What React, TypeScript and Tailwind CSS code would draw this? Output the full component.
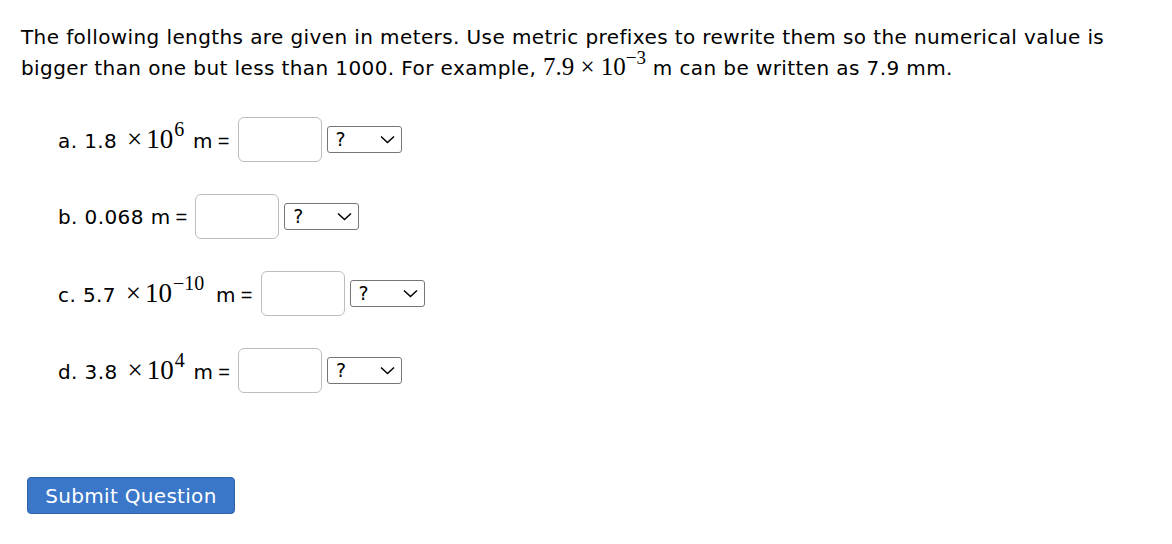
import React from "react";

const sans = { fontFamily: '"DejaVu Sans", sans-serif' };
const serif = { fontFamily: '"Liberation Serif", serif' };
const arial = { fontFamily: '"Liberation Sans", sans-serif' };

function Select() {
  return (
    <div className="flex h-[27px] w-[75px] items-center justify-between rounded-[3px] border border-[#767676] bg-white pl-[8px] pr-[6px]">
      <span className="text-[19px] leading-none text-black" style={sans}>?</span>
      <svg width="15" height="9" viewBox="0 0 15 9" fill="none">
        <path d="M1 1.5 L7.5 7.5 L14 1.5" stroke="#000" strokeWidth="1.5" />
      </svg>
    </div>
  );
}

function Input() {
  return <div className="h-[45px] w-[84px] rounded-[6px] border border-[#bdbdbd] bg-white" />;
}

function Row({ label, exp, extra = false }: { label: string; exp?: string; extra?: boolean }) {
  return (
    <div className="flex items-center">
      <span className="text-[20px] tracking-[0.4px] text-[#000]" style={sans}>
        {label}
        {exp !== undefined && (
          <>
            {" "}
            <span style={serif} className="ml-[3px] text-[27px] tracking-normal">
              <span className="mr-[4px]">×</span>10
              <sup className={`-top-[12px] ml-[1px] text-[20px] ${extra ? "mr-[5px]" : "mr-[2px]"}`}>{exp}</sup>
            </span>
          </>
        )}
        {" "}m<span style={arial} className="ml-[5px] text-[20px] tracking-normal">=</span>
      </span>
      <div className="ml-[8px]"><Input /></div>
      <div className="ml-[5px]"><Select /></div>
    </div>
  );
}

export default function App() {
  return (
    <div className="h-[544px] w-[1172px] bg-white pl-[21px] pt-[22px]" style={sans}>
      <p className="w-[1110px] text-[20px] leading-[30px] tracking-[0.4px] text-black">
        The following lengths are given in meters. Use metric prefixes to rewrite them so the numerical value is
        bigger than one but less than 1000. For example,{" "}
        <span style={serif} className="text-[25px] tracking-normal">
          7.9 × 10<sup className="-top-[11px] text-[19px]">−3</sup>
        </span>{" "}
        m can be written as 7.9 mm.
      </p>
      <div className="ml-[37px] mt-[34px] flex flex-col gap-[32px]">
        <Row label="a. 1.8" exp="6" />
        <Row label="b. 0.068" />
        <Row label="c. 5.7" exp="−10" extra />
        <Row label="d. 3.8" exp="4" />
      </div>
      <button className="mt-[84px] ml-[6px] h-[37px] w-[208px] rounded-[4px] border border-[#2f63a8] bg-[#3a77c9] text-[20px] tracking-[0.3px] text-white" style={sans}>
        Submit Question
      </button>
    </div>
  );
}
